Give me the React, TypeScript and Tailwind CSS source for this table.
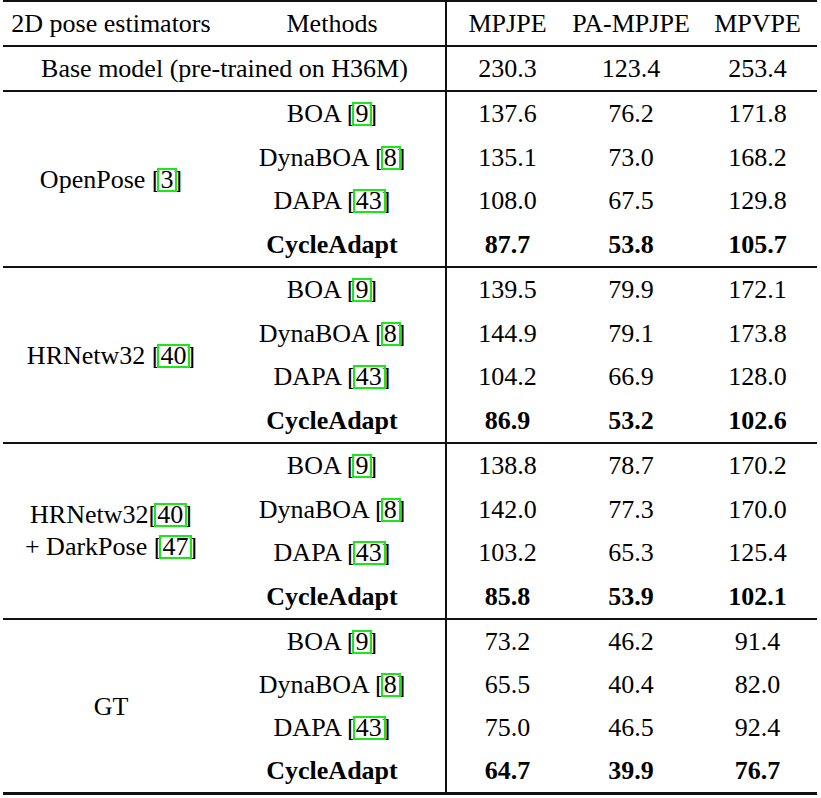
import type { ReactNode } from "react"

type Row = {
  method: ReactNode
  bold?: boolean
  values: [string, string, string]
}

type Group = {
  label: ReactNode
  rows: Row[]
}

function Cite({ n }: { n: string }) {
  return (
    <span>
      [
      <span className="relative">
        {n}
        <span className="absolute -left-[3px] -right-[4px] top-[3px] bottom-[2px] border-2 border-[#18e818]" />
      </span>
      ]
    </span>
  )
}

const groups: Group[] = [
  {
    label: (
      <span>
        OpenPose <Cite n="3" />
      </span>
    ),
    rows: [
      { method: <span>BOA <Cite n="9" /></span>, values: ["137.6", "76.2", "171.8"] },
      { method: <span>DynaBOA <Cite n="8" /></span>, values: ["135.1", "73.0", "168.2"] },
      { method: <span>DAPA <Cite n="43" /></span>, values: ["108.0", "67.5", "129.8"] },
      { method: "CycleAdapt", bold: true, values: ["87.7", "53.8", "105.7"] },
    ],
  },
  {
    label: (
      <span>
        HRNetw32 <Cite n="40" />
      </span>
    ),
    rows: [
      { method: <span>BOA <Cite n="9" /></span>, values: ["139.5", "79.9", "172.1"] },
      { method: <span>DynaBOA <Cite n="8" /></span>, values: ["144.9", "79.1", "173.8"] },
      { method: <span>DAPA <Cite n="43" /></span>, values: ["104.2", "66.9", "128.0"] },
      { method: "CycleAdapt", bold: true, values: ["86.9", "53.2", "102.6"] },
    ],
  },
  {
    label: (
      <span className="flex flex-col items-center leading-[32px]">
        <span>
          HRNetw32<Cite n="40" />
        </span>
        <span>
          + DarkPose <Cite n="47" />
        </span>
      </span>
    ),
    rows: [
      { method: <span>BOA <Cite n="9" /></span>, values: ["138.8", "78.7", "170.2"] },
      { method: <span>DynaBOA <Cite n="8" /></span>, values: ["142.0", "77.3", "170.0"] },
      { method: <span>DAPA <Cite n="43" /></span>, values: ["103.2", "65.3", "125.4"] },
      { method: "CycleAdapt", bold: true, values: ["85.8", "53.9", "102.1"] },
    ],
  },
  {
    label: <span>GT</span>,
    rows: [
      { method: <span>BOA <Cite n="9" /></span>, values: ["73.2", "46.2", "91.4"] },
      { method: <span>DynaBOA <Cite n="8" /></span>, values: ["65.5", "40.4", "82.0"] },
      { method: <span>DAPA <Cite n="43" /></span>, values: ["75.0", "46.5", "92.4"] },
      { method: "CycleAdapt", bold: true, values: ["64.7", "39.9", "76.7"] },
    ],
  },
]

const cols = "grid grid-cols-[216px_226px_2px_121px_126px_123px]"
const cell = "flex items-center justify-center whitespace-nowrap"

function Rule({ thick }: { thick?: boolean }) {
  return <div className={thick ? "h-[3px] bg-[#111]" : "h-[2px] bg-[#111]"} />
}

export default function App() {
  return (
    <div className="h-[798px] w-[821px] bg-white font-['Liberation_Serif',serif] text-[26px] text-black">
      <div className="ml-[3px] w-[814px]">
        <Rule />

        <div className={`${cols} h-[43px]`}>
          <div className={cell}>2D pose estimators</div>
          <div className={cell}>Methods</div>
          <div className="bg-[#111]" />
          <div className={cell}>MPJPE</div>
          <div className={cell}>PA-MPJPE</div>
          <div className={`${cell} pl-[4px]`}>MPVPE</div>
        </div>
        <Rule />

        <div className={`${cols} h-[43px]`}>
          <div className={`${cell} col-span-2 pl-[1px]`}>Base model (pre-trained on H36M)</div>
          <div className="bg-[#111]" />
          <div className={cell}>230.3</div>
          <div className={cell}>123.4</div>
          <div className={`${cell} pl-[4px]`}>253.4</div>
        </div>

        {groups.map((g, gi) => (
          <div key={gi}>
            <Rule />
            <div className={`${cols} grid-rows-4 ${gi === 3 ? "h-[172px]" : "h-[174px]"}`}>
              <div className={cell} style={{ gridRow: "1 / span 4", gridColumn: 1 }}>
                {g.label}
              </div>
              <div className="bg-[#111]" style={{ gridRow: "1 / span 4", gridColumn: 3 }} />
              {g.rows.map((r, ri) => (
                <div key={ri} className="contents">
                  <div
                    className={`${cell} ${r.bold ? "font-bold" : ""}`}
                    style={{ gridRow: ri + 1, gridColumn: 2 }}
                  >
                    {r.method}
                  </div>
                  {r.values.map((v, vi) => (
                    <div
                      key={vi}
                      className={`${cell} ${r.bold ? "font-bold" : ""} ${vi === 2 ? "pl-[4px]" : ""}`}
                      style={{ gridRow: ri + 1, gridColumn: vi + 4 }}
                    >
                      {v}
                    </div>
                  ))}
                </div>
              ))}
            </div>
          </div>
        ))}
        <Rule thick />
      </div>
    </div>
  )
}
